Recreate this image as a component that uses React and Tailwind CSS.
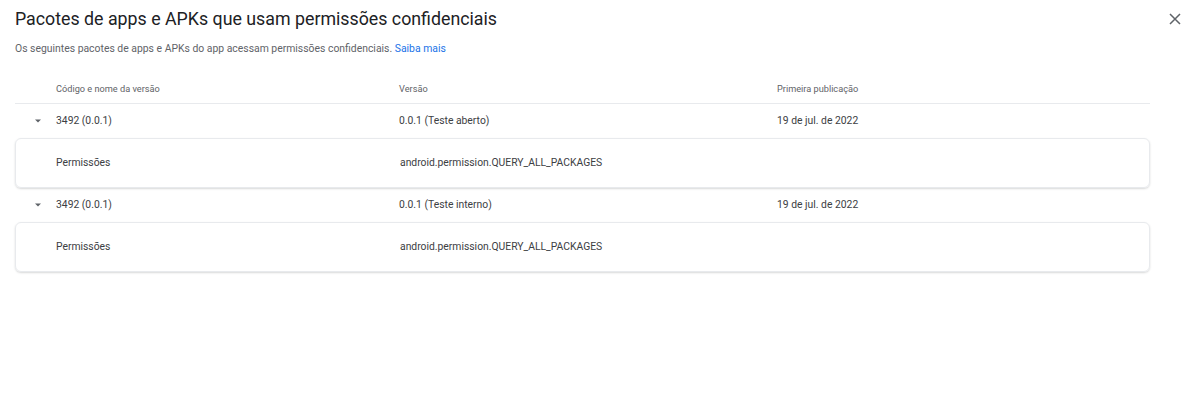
const rows = [
  { code: "3492 (0.0.1)", version: "0.0.1 (Teste aberto)", date: "19 de jul. de 2022", perm: "android.permission.QUERY_ALL_PACKAGES" },
  { code: "3492 (0.0.1)", version: "0.0.1 (Teste interno)", date: "19 de jul. de 2022", perm: "android.permission.QUERY_ALL_PACKAGES" },
];

function Caret() {
  return (
    <svg width="8" height="8" viewBox="0 0 8 8" className="text-[#5f6368]">
      <path d="M1 2.5h6L4 5.5z" fill="currentColor" />
    </svg>
  );
}

export default function App() {
  return (
    <div className="relative h-[406px] w-[1200px] bg-white font-['Roboto',sans-serif] text-[#3c4043]">
      <button className="absolute right-[18px] top-[12px] text-[#5f6368]">
        <svg width="14" height="14" viewBox="0 0 14 14">
          <path d="M2 2l10 10M12 2L2 12" stroke="currentColor" strokeWidth="1.5" />
        </svg>
      </button>
      <div className="pl-[15px] pr-[50px] pt-[8px]">
        <h1 className="text-[17.8px] leading-[22px] text-[#202124]">
          Pacotes de apps e APKs que usam permissões confidenciais
        </h1>
        <p className="mt-[12px] text-[10.4px] leading-[14px] text-[#5f6368]">
          Os seguintes pacotes de apps e APKs do app acessam permissões confidenciais.{" "}
          <a className="text-[#1a73e8]">Saiba mais</a>
        </p>
      </div>
      <div className="mx-[15px] mt-[19px] w-[1135px]">
        <div className="grid h-[29px] grid-cols-[384px_378px_1fr] items-center border-b border-[#e8eaed] text-[9.2px] text-[#5f6368]">
          <div className="pl-[41px]">Código e nome da versão</div>
          <div>Versão</div>
          <div>Primeira publicação</div>
        </div>
        {rows.map((r, i) => (
          <div key={i}>
            <div className="grid h-[34px] grid-cols-[384px_378px_1fr] items-center text-[10.35px]">
              <div className="flex items-center">
                <span className="ml-[19px] mr-[14px] flex w-[8px] items-center"><Caret /></span>
                {r.code}
              </div>
              <div>{r.version}</div>
              <div>{r.date}</div>
            </div>
            <div className="grid h-[50px] grid-cols-[384px_1fr] items-center rounded-[6px] border border-[#e8eaed] text-[10.35px] shadow-[0_1px_2px_rgba(60,64,67,0.2)]">
              <div className="pl-[40px]">Permissões</div>
              <div>{r.perm}</div>
            </div>
          </div>
        ))}
      </div>
    </div>
  );
}
